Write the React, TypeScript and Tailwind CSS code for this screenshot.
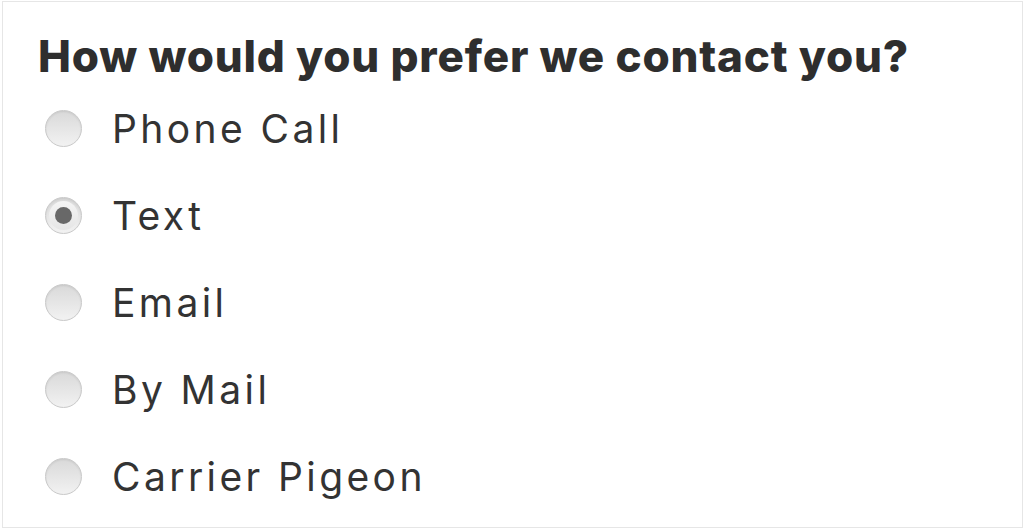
import React from "react";

const options = [
  { label: "Phone Call", checked: false },
  { label: "Text", checked: true },
  { label: "Email", checked: false },
  { label: "By Mail", checked: false },
  { label: "Carrier Pigeon", checked: false },
];

function Radio({ checked }: { checked: boolean }) {
  return (
    <div className="flex h-[37px] w-[37px] shrink-0 items-center justify-center rounded-full border border-[#c9c9c9] bg-gradient-to-b from-[#d9d9d9] to-[#f2f2f2] shadow-[inset_0_1px_2px_rgba(0,0,0,0.08)]">
      {checked && (
        <div className="flex h-[29px] w-[29px] items-center justify-center rounded-full bg-gradient-to-b from-[#f4f4f4] to-[#e6e6e6]">
          <div className="h-[17px] w-[17px] rounded-full bg-[#686868]" />
        </div>
      )}
    </div>
  );
}

export default function App() {
  return (
    <div className="h-[529px] w-[1024px] bg-white p-[1px] pl-[2px]" style={{ fontFamily: "Inter, 'Noto Sans', sans-serif" }}>
      <div className="h-full w-full border border-[#e6e6e6] pl-[35px] pt-[28px] text-[#333333]">
        <h1 className="text-[44px] font-extrabold leading-[52px] tracking-[0.8px] text-[#2e2e2e]">How would you prefer we contact you?</h1>
        <div className="mt-[3px] flex flex-col">
          {options.map((o) => (
            <div key={o.label} className="flex h-[87px] items-center">
              <div className="ml-[7px]">
                <Radio checked={o.checked} />
              </div>
              <span className="ml-[30px] text-[39px] font-normal leading-none tracking-[3.4px]">{o.label}</span>
            </div>
          ))}
        </div>
      </div>
    </div>
  );
}
